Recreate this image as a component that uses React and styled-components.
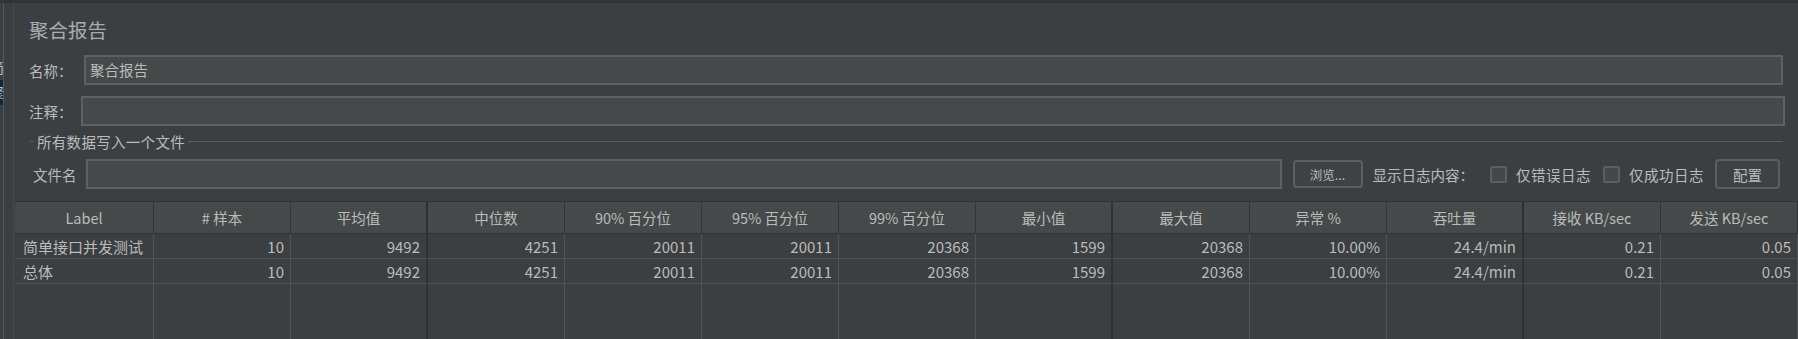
import React from "react";
import styled, { createGlobalStyle } from "styled-components";

const GlobalStyle = createGlobalStyle`
    body {
        margin: 0;
        background: #3c3f41;
        font-family: "Noto Sans CJK SC", "Noto Sans", sans-serif;
        color: #bbbbbb;
        overflow: hidden;
    }
`;

const Frame = styled.div`
    width: 1798px;
    height: 339px;
    display: flex;
    flex-direction: column;
    overflow: hidden;
    background: #3c3f41;
`;

const TopBar = styled.div`
    height: 3px;
    flex: none;
    background: #313335;
`;

const Body = styled.div`
    flex: 1;
    display: flex;
    min-height: 0;
`;

const TreeStrip = styled.div`
    width: 3px;
    flex: none;
    overflow: hidden;
    border-right: 1px solid #56595b;
    padding-top: 52px;
    font-size: 14px;
    line-height: 25px;
    white-space: nowrap;
`;

const TreeItem = styled.div`
    height: 25px;
    background: ${(p) => (p.$selected ? "#0d293e" : "transparent")};
    margin-left: -10px;
`;

const Gutter = styled.div`
    width: 9px;
    flex: none;
    border-right: 1px solid #47494b;
`;

const Panel = styled.div`
    flex: 1;
    display: flex;
    flex-direction: column;
    min-width: 0;
`;

const Title = styled.div`
    height: 52px;
    padding-left: 15px;
    padding-top: 15px;
    box-sizing: border-box;
    font-size: 19.5px;
    line-height: 24px;
    color: #a9acae;
`;

const FieldRow = styled.div`
    display: flex;
    align-items: center;
    height: 30px;
    margin-top: ${(p) => p.$top || 0}px;
    padding-left: 15px;
    padding-right: ${(p) => p.$right || 15}px;
`;

const Label = styled.div`
    width: ${(p) => p.$w}px;
    flex: none;
    font-size: 14.5px;
    color: #bbbbbb;
`;

const TextInput = styled.div`
    flex: 1;
    height: 100%;
    box-sizing: border-box;
    background: #45494a;
    border: 2px solid #5e6162;
    padding-left: 4px;
    font-size: 14.5px;
    line-height: 26px;
    color: #bbbbbb;
`;

const Group = styled.div`
    margin: 9px 15px 0 16px;
    height: 12px;
    display: flex;
    align-items: center;
`;

const GroupLine = styled.div`
    height: 1px;
    background: #5b5e60;
    width: ${(p) => (p.$w ? `${p.$w}px` : "auto")};
    flex: ${(p) => (p.$w ? "none" : 1)};
`;

const GroupTitle = styled.div`
    padding: 0 3px;
    font-size: 14.5px;
    letter-spacing: 0.3px;
    color: #bbbbbb;
`;

const FileRow = styled.div`
    display: flex;
    align-items: center;
    height: 30px;
    margin-top: 12px;
    padding-left: 19px;
    padding-right: 19px;
`;

const FileInput = styled(TextInput)`
    flex: none;
    width: 1196px;
    height: 30px;
    margin-left: 9px;
`;

const Button = styled.div`
    flex: none;
    width: ${(p) => p.$w}px;
    height: ${(p) => p.$h}px;
    box-sizing: border-box;
    border: 2px solid #5c5f61;
    border-radius: 4px;
    background: #3f4244;
    display: flex;
    align-items: center;
    justify-content: center;
    font-size: ${(p) => p.$fs}px;
    color: #bbbbbb;
    margin-left: ${(p) => p.$ml}px;
`;

const Text = styled.div`
    flex: none;
    font-size: 14.5px;
    letter-spacing: ${(p) => p.$ls || 0}px;
    color: #bbbbbb;
    margin-left: ${(p) => p.$ml}px;
`;

const Check = styled.div`
    flex: none;
    width: 17px;
    height: 17px;
    box-sizing: border-box;
    border: 2px solid #5c5f61;
    border-radius: 2px;
    background: #43494a;
    margin-left: ${(p) => p.$ml}px;
`;

const Table = styled.div`
    margin-top: 12px;
    margin-left: 1px;
    flex: 1;
    display: grid;
    grid-template-columns: 139px repeat(12, 1fr);
    grid-template-rows: 32px 25px 25px 1fr;
    border-top: 1px solid #313335;
`;

const HeadCell = styled.div`
    background: #45494a;
    border-right: ${(p) => (p.$thick ? "2px solid #2f3133" : "1px solid #323436")};
    border-bottom: 1px solid #323436;
    display: flex;
    align-items: center;
    justify-content: center;
    font-size: 14.5px;
    color: #bbbbbb;
    white-space: nowrap;
`;

const Cell = styled.div`
    border-right: ${(p) => (p.$thick ? "2px solid #2f3133" : "1px solid #4f5355")};
    border-bottom: ${(p) => (p.$filler ? "none" : "1px solid #4f5355")};
    display: flex;
    align-items: center;
    justify-content: ${(p) => (p.$left ? "flex-start" : "flex-end")};
    padding: 0 ${(p) => (p.$left ? 0 : 6)}px 0 ${(p) => (p.$left ? 8 : 0)}px;
    font-size: 15px;
    color: #bbbbbb;
    white-space: nowrap;
`;

const headers = [
    "Label",
    "# 样本",
    "平均值",
    "中位数",
    "90% 百分位",
    "95% 百分位",
    "99% 百分位",
    "最小值",
    "最大值",
    "异常 %",
    "吞吐量",
    "接收 KB/sec",
    "发送 KB/sec",
];

const thickCols = [2, 7, 10];

const rows = [
    ["简单接口并发测试", "10", "9492", "4251", "20011", "20011", "20368", "1599", "20368", "10.00%", "24.4/min", "0.21", "0.05"],
    ["总体", "10", "9492", "4251", "20011", "20011", "20368", "1599", "20368", "10.00%", "24.4/min", "0.21", "0.05"],
];

const App = () => (
    <Frame>
        <GlobalStyle />
        <TopBar />
        <Body>
            <TreeStrip>
                <TreeItem>简单接口</TreeItem>
                <TreeItem $selected>聚合报告</TreeItem>
            </TreeStrip>
            <Gutter />
            <Panel>
                <Title>聚合报告</Title>
                <FieldRow>
                    <Label $w={55}>名称：</Label>
                    <TextInput>聚合报告</TextInput>
                </FieldRow>
                <FieldRow $top={11} $right={13}>
                    <Label $w={52}>注释：</Label>
                    <TextInput />
                </FieldRow>
                <Group>
                    <GroupLine $w={4} />
                    <GroupTitle>所有数据写入一个文件</GroupTitle>
                    <GroupLine />
                </Group>
                <FileRow>
                    <Text $ml={0}>文件名</Text>
                    <FileInput />
                    <Button $w={70} $h={28} $fs={12.5} $ml={11}>
                        浏览...
                    </Button>
                    <Text $ml={10}>显示日志内容：</Text>
                    <Check $ml={16} />
                    <Text $ml={9} $ls={0.5}>仅错误日志</Text>
                    <Check $ml={12} />
                    <Text $ml={9} $ls={0.5}>仅成功日志</Text>
                    <Button $w={65} $h={30} $fs={14.5} $ml={11}>
                        配置
                    </Button>
                </FileRow>
                <Table>
                    {headers.map((h, i) => (
                        <HeadCell key={h} $thick={thickCols.includes(i)}>
                            {h}
                        </HeadCell>
                    ))}
                    {rows.map((r) =>
                        r.map((v, i) => (
                            <Cell
                                key={`${r[0]}-${i}`}
                                $left={i === 0}
                                $thick={thickCols.includes(i)}
                            >
                                {v}
                            </Cell>
                        ))
                    )}
                    {headers.map((h, i) => (
                        <Cell key={`f-${h}`} $filler $thick={thickCols.includes(i)} />
                    ))}
                </Table>
            </Panel>
        </Body>
    </Frame>
);

export default App;
